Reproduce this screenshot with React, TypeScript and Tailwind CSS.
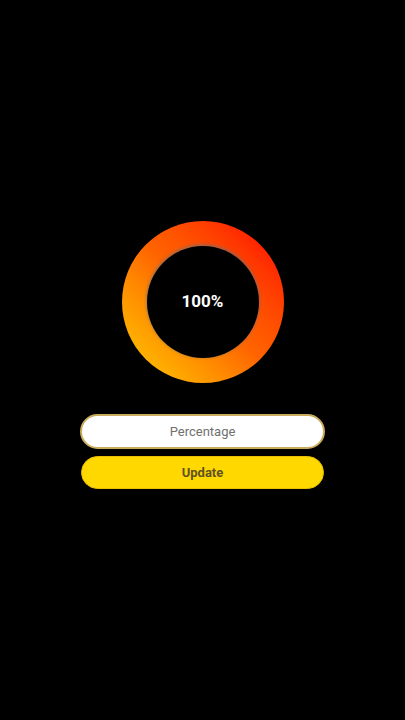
import React from "react";

export default function App() {
  return (
    <div className="w-full h-[720px] bg-black flex flex-col items-center pt-[221px]" style={{ fontFamily: "Roboto, 'Noto Sans', sans-serif" }}>
      <div className="w-[162px] h-[162px] rounded-full bg-linear-to-bl from-[#ff1000] from-10% via-[#ff6400] via-50% to-[#ffc400] to-95% flex items-center justify-center">
        <div className="w-[112px] h-[112px] rounded-full bg-black flex items-center justify-center shadow-[0_-1px_3px_1px_rgba(110,110,110,0.6)]">
          <span className="text-white font-bold text-[17px]">100%</span>
        </div>
      </div>
      <div className="mt-[31px] w-[245px] h-[35px] rounded-full bg-white border-2 border-[#c9ab5c] flex items-center justify-center">
        <span className="text-[#707070] text-[13px]">Percentage</span>
      </div>
      <div className="mt-[7px] w-[243px] h-[33px] rounded-full bg-[#ffd800] border border-[#e8c000] flex items-center justify-center">
        <span className="text-[#5f5220] font-bold text-[13px]">Update</span>
      </div>
    </div>
  );
}
